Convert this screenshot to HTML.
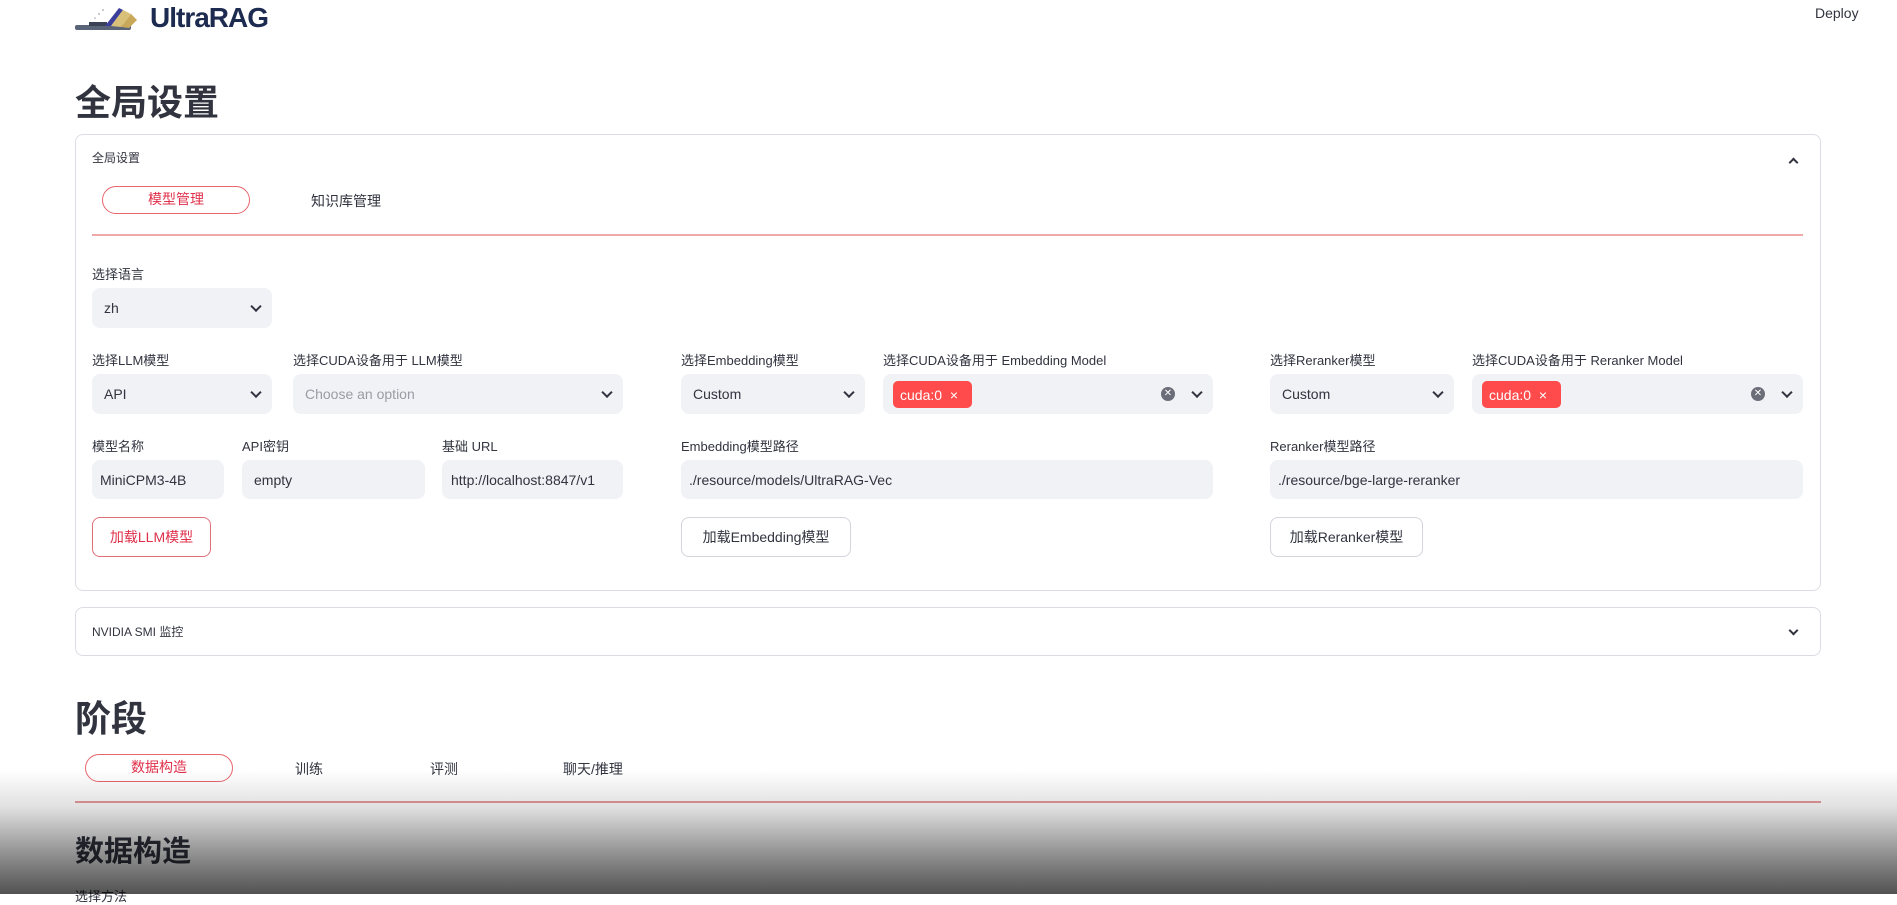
<!DOCTYPE html>
<html><head><meta charset="utf-8"><style>
*{margin:0;padding:0;box-sizing:border-box}
body{width:1897px;height:894px;overflow:hidden;background:#fff;position:relative;font-family:"Liberation Sans","Noto Sans CJK SC",sans-serif;color:#31333f}
.a{position:absolute;white-space:nowrap}
.lbl{font-size:13px;color:#31333f}
.sel{position:absolute;background:#f0f2f6;border-radius:8px;font-size:14px;display:flex;align-items:center;padding-left:12px}
.chev{position:absolute;right:12px;top:50%;width:8px;height:8px;border-right:2px solid #31333f;border-bottom:2px solid #31333f;transform:translateY(-70%) rotate(45deg)}
.btn{position:absolute;border:1px solid #d3d5db;border-radius:8px;background:#fff;font-size:14px;display:flex;align-items:center;justify-content:center}
.tag{position:absolute;background:#ff4b4b;color:#fff;border-radius:5px;font-size:14px;display:flex;align-items:center;padding-left:7px}
.clr{position:absolute;width:14px;height:14px;border-radius:50%;background:#6b6e78;color:#fff;font-size:10px;line-height:14px;text-align:center}
.box{position:absolute;border:1px solid #dcdde2;border-radius:8px}
</style></head><body>
<svg class="a" style="left:75px;top:6px" width="74" height="26" viewBox="0 0 74 26">
<rect x="0" y="19" width="56" height="5" rx="2" fill="#5a6478"/>
<rect x="14" y="16" width="18" height="4" fill="#3a4256"/>
<polygon points="30,20 44,2 48,4 36,20" fill="#3b3f9a"/>
<polygon points="36,20 48,4 56,8 46,21" fill="#d8c078"/>
<polygon points="46,21 56,8 62,14 54,22" fill="#c9a85a"/>
<circle cx="24" cy="8" r="1" fill="#bbb"/><circle cx="28" cy="4" r="1" fill="#bbb"/><circle cx="20" cy="12" r="1" fill="#ccc"/>
</svg>
<div class="a" style="left:150px;top:2px;font-size:28px;font-weight:bold;color:#1c2b4f;letter-spacing:-1px">UltraRAG</div>
<div class="a" style="left:1815px;top:5px;font-size:14px;color:#31333f">Deploy</div>

<div class="a" style="left:75px;top:74px;font-size:36px;font-weight:bold">全局设置</div>

<div class="box" style="left:75px;top:134px;width:1746px;height:457px"></div>
<div class="a lbl" style="left:92px;top:149px;font-size:12px">全局设置</div>
<div class="chev" style="left:1790px;top:159px;right:auto;transform:rotate(-135deg);width:7px;height:7px"></div>
<div class="a" style="left:102px;top:186px;width:148px;height:28px;border:1.5px solid #e8666e;border-radius:14px;color:#e0304a;font-size:14px;text-align:center;line-height:25px">模型管理</div>
<div class="a" style="left:311px;top:191px;font-size:14px">知识库管理</div>
<div class="a" style="left:92px;top:234px;width:1711px;height:2px;background:#f0a8aa"></div>

<div class="a lbl" style="left:92px;top:264px">选择语言</div>
<div class="sel" style="left:92px;top:288px;width:180px;height:40px">zh<div class="chev"></div></div>

<div class="a lbl" style="left:92px;top:350px">选择LLM模型</div>
<div class="a lbl" style="left:293px;top:350px">选择CUDA设备用于 LLM模型</div>
<div class="a lbl" style="left:681px;top:350px">选择Embedding模型</div>
<div class="a lbl" style="left:883px;top:350px">选择CUDA设备用于 Embedding Model</div>
<div class="a lbl" style="left:1270px;top:350px">选择Reranker模型</div>
<div class="a lbl" style="left:1472px;top:350px">选择CUDA设备用于 Reranker Model</div>

<div class="sel" style="left:92px;top:374px;width:180px;height:40px">API<div class="chev"></div></div>
<div class="sel" style="left:293px;top:374px;width:330px;height:40px;color:#9a9ca5">Choose an option<div class="chev"></div></div>
<div class="sel" style="left:681px;top:374px;width:184px;height:40px">Custom<div class="chev"></div></div>
<div class="sel" style="left:883px;top:374px;width:330px;height:40px"><div class="chev"></div><div class="clr" style="right:38px;top:13px">✕</div></div>
<div class="tag" style="left:893px;top:381px;width:79px;height:27px">cuda:0 &nbsp;×</div>
<div class="sel" style="left:1270px;top:374px;width:184px;height:40px">Custom<div class="chev"></div></div>
<div class="sel" style="left:1472px;top:374px;width:331px;height:40px"><div class="chev"></div><div class="clr" style="right:38px;top:13px">✕</div></div>
<div class="tag" style="left:1482px;top:381px;width:79px;height:27px">cuda:0 &nbsp;×</div>

<div class="a lbl" style="left:92px;top:436px">模型名称</div>
<div class="a lbl" style="left:242px;top:436px">API密钥</div>
<div class="a lbl" style="left:442px;top:436px">基础 URL</div>
<div class="a lbl" style="left:681px;top:436px">Embedding模型路径</div>
<div class="a lbl" style="left:1270px;top:436px">Reranker模型路径</div>

<div class="sel" style="left:92px;top:460px;width:132px;height:39px;padding-left:8px">MiniCPM3-4B</div>
<div class="sel" style="left:242px;top:460px;width:183px;height:39px">empty</div>
<div class="sel" style="left:442px;top:460px;width:181px;height:39px;padding-left:9px">http://localhost:8847/v1</div>
<div class="sel" style="left:681px;top:460px;width:532px;height:39px;padding-left:8px">./resource/models/UltraRAG-Vec</div>
<div class="sel" style="left:1270px;top:460px;width:533px;height:39px;padding-left:8px">./resource/bge-large-reranker</div>

<div class="btn" style="left:92px;top:517px;width:119px;height:40px;border-color:#e07078;color:#e0304a">加载LLM模型</div>
<div class="btn" style="left:681px;top:517px;width:170px;height:40px">加载Embedding模型</div>
<div class="btn" style="left:1270px;top:517px;width:153px;height:40px">加载Reranker模型</div>

<div class="box" style="left:75px;top:607px;width:1746px;height:49px"></div>
<div class="a lbl" style="left:92px;top:623px;font-size:12px">NVIDIA SMI 监控</div>
<div class="chev" style="left:1790px;top:627px;right:auto;transform:rotate(45deg);width:7px;height:7px"></div>

<div class="a" style="left:75px;top:690px;font-size:36px;font-weight:bold">阶段</div>
<div class="a" style="left:85px;top:754px;width:148px;height:28px;border:1.5px solid #e8666e;border-radius:14px;color:#e0304a;font-size:14px;text-align:center;line-height:25px">数据构造</div>
<div class="a" style="left:295px;top:759px;font-size:14px">训练</div>
<div class="a" style="left:430px;top:759px;font-size:14px">评测</div>
<div class="a" style="left:563px;top:759px;font-size:14px">聊天/推理</div>
<div class="a" style="left:75px;top:801px;width:1746px;height:2px;background:#e89a9c"></div>
<div class="a" style="left:75px;top:828px;font-size:29px;font-weight:bold">数据构造</div>
<div class="a lbl" style="left:75px;top:886px">选择方法</div>
<div class="a" style="left:0;top:770px;width:1897px;height:124px;background:linear-gradient(to bottom,rgba(0,0,0,0) 0%,rgba(0,0,0,0.12) 30%,rgba(0,0,0,0.45) 70%,rgba(0,0,0,0.68) 100%)"></div>
</body></html>
